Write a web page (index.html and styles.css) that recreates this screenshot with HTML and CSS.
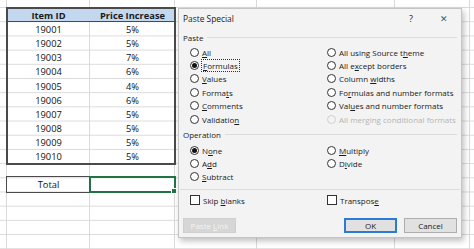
FILE: index.html
```html
<!DOCTYPE html>
<html lang="en">
<head>
    <meta charset="UTF-8">
    <title>Paste Special</title>
    <link rel="stylesheet" href="styles.css">
</head>
<body>
    <div class="sheet">
        <div class="table">
            <div class="head">Item ID</div>
            <div class="head">Price Increase</div>
            <div>19001</div><div>5%</div>
            <div>19002</div><div>5%</div>
            <div>19003</div><div>7%</div>
            <div>19004</div><div>6%</div>
            <div>19005</div><div>4%</div>
            <div>19006</div><div>6%</div>
            <div>19007</div><div>5%</div>
            <div>19008</div><div>5%</div>
            <div>19009</div><div>5%</div>
            <div>19010</div><div>5%</div>
        </div>
        <div class="total-row">
            <div class="total">Total</div>
            <div class="selected"><span class="handle"></span></div>
        </div>
    </div>

    <div class="dialog">
        <div class="titlebar">
            <span class="title">Paste Special</span>
            <span class="help">?</span>
            <span class="close">&#x2715;</span>
        </div>
        <div class="body">
            <div class="group"><span>Paste</span></div>
            <div class="options">
                <div class="opt"><span class="radio"></span><span><u>A</u>ll</span></div>
                <div class="opt"><span class="radio"></span><span>All using Source t<u>h</u>eme</span></div>
                <div class="opt"><span class="radio on"></span><span class="focus"><u>F</u>ormulas</span></div>
                <div class="opt"><span class="radio"></span><span>All e<u>x</u>cept borders</span></div>
                <div class="opt"><span class="radio"></span><span><u>V</u>alues</span></div>
                <div class="opt"><span class="radio"></span><span>Column <u>w</u>idths</span></div>
                <div class="opt"><span class="radio"></span><span>Forma<u>t</u>s</span></div>
                <div class="opt"><span class="radio"></span><span>Fo<u>r</u>mulas and number formats</span></div>
                <div class="opt"><span class="radio"></span><span><u>C</u>omments</span></div>
                <div class="opt"><span class="radio"></span><span>Val<u>u</u>es and number formats</span></div>
                <div class="opt"><span class="radio"></span><span>Validatio<u>n</u></span></div>
                <div class="opt disabled"><span class="radio"></span><span>All merging conditional formats</span></div>
            </div>
            <div class="group"><span>Operation</span></div>
            <div class="options">
                <div class="opt"><span class="radio on"></span><span>N<u>o</u>ne</span></div>
                <div class="opt"><span class="radio"></span><span><u>M</u>ultiply</span></div>
                <div class="opt"><span class="radio"></span><span>A<u>d</u>d</span></div>
                <div class="opt"><span class="radio"></span><span>D<u>i</u>vide</span></div>
                <div class="opt"><span class="radio"></span><span><u>S</u>ubtract</span></div>
                <div class="opt"></div>
            </div>
            <div class="separator"></div>
            <div class="options checks">
                <div class="opt"><span class="check"></span><span>Skip <u>b</u>lanks</span></div>
                <div class="opt"><span class="check"></span><span>Transpos<u>e</u></span></div>
            </div>
            <div class="buttons">
                <button class="btn disabled-btn">Paste <u>L</u>ink</button>
                <span class="spacer"></span>
                <button class="btn default">OK</button>
                <button class="btn">Cancel</button>
            </div>
        </div>
    </div>
</body>
</html>
```

FILE: styles.css
```css
body {
    margin: 0;
    width: 474px;
    height: 249px;
    overflow: hidden;
    position: relative;
    background: white;
}
.sheet {
    height: 249px;
    display: grid;
    grid-template-columns: 7px 83px 85px 1fr;
    grid-template-rows: 8px repeat(11, 14.2px) 14.2px 14.2px 1fr;
    font-family: "Open Sans", "Liberation Sans", sans-serif;
    font-size: 9.3px;
    color: #111;
    background-image:
        linear-gradient(to right,
            transparent 6px, #dadada 6px 7px,
            transparent 7px 89px, #dadada 89px 90px,
            transparent 90px 174px, #dadada 174px 175px,
            transparent 175px 256px, #dadada 256px 257px,
            transparent 257px 394px, #dadada 394px 395px,
            transparent 395px 469px, #dadada 469px 470px,
            transparent 470px),
        linear-gradient(to bottom, transparent 13.2px, #dadada 13.2px);
    background-size: 100% 100%, 100% 14.2px;
    background-repeat: no-repeat, repeat-y;
    background-position: 0 0, 0 8px;
}
.table {
    grid-row: 2 / 13;
    grid-column: 2 / 4;
    display: grid;
    grid-template-columns: 83px 85px;
    grid-auto-rows: 14.2px;
    outline: 2px solid #4a4a4a;
    outline-offset: -1px;
}
.table div {
    display: flex;
    align-items: center;
    justify-content: center;
}
.table .head {
    background: #c3d8ee;
    font-weight: bold;
    color: #1a1a1a;
    border-bottom: 1px solid #4a4a4a;
    margin-top: 1px;
}
.total-row {
    grid-row: 14;
    grid-column: 2 / 4;
    display: grid;
    grid-template-columns: 83px 85px;
    margin-top: -1px;
}
.total {
    display: flex;
    align-items: center;
    justify-content: center;
    outline: 1px solid #4a4a4a;
}
.selected {
    position: relative;
    outline: 2px solid #217346;
    outline-offset: -1px;
}
.handle {
    position: absolute;
    right: -2px;
    bottom: -2px;
    width: 4px;
    height: 4px;
    background: #217346;
    border: 1px solid white;
}

.dialog {
    position: absolute;
    left: 178px;
    top: 8px;
    width: 284px;
    height: 230px;
    box-sizing: border-box;
    background: #f3f3f3;
    border: 1px solid #c4c4c4;
    box-shadow: 2px 3px 6px rgba(0, 0, 0, 0.25);
    font-family: "Open Sans", "Noto Sans", sans-serif;
    font-size: 8px;
    color: #1a1a1a;
    display: flex;
    flex-direction: column;
}
.titlebar {
    height: 19px;
    display: flex;
    align-items: center;
    padding: 0 4px;
    font-size: 8.4px;
}
.title {
    flex: 1;
}
.help {
    width: 31px;
    font-size: 9px;
}
.close {
    width: 17px;
    color: #555;
    font-size: 9px;
}
.body {
    padding: 0 4px 0 4px;
    display: flex;
    flex-direction: column;
}
.group {
    height: 12px;
    margin-top: 3px;
    display: flex;
    align-items: center;
    gap: 4px;
}
.group::after {
    content: "";
    flex: 1;
    height: 1px;
    background: #dcdcdc;
}
.options {
    display: grid;
    grid-template-columns: 137px 1fr;
    grid-auto-rows: 13.4px;
    padding-left: 7px;
    margin-top: 2.5px;
}
.options.checks {
    margin-top: 4px;
}
.opt {
    display: flex;
    align-items: center;
    gap: 3px;
    white-space: nowrap;
}
.opt u {
    text-decoration-thickness: 1px;
    text-underline-offset: 1px;
}
.radio {
    width: 9px;
    height: 9px;
    box-sizing: border-box;
    border: 1px solid #333;
    border-radius: 50%;
    background: white;
    display: flex;
    align-items: center;
    justify-content: center;
}
.radio.on::after {
    content: "";
    width: 5px;
    height: 5px;
    border-radius: 50%;
    background: #111;
}
.check {
    width: 10px;
    height: 10px;
    box-sizing: border-box;
    border: 1px solid #333;
    background: white;
}
.focus {
    outline: 1px dotted #333;
    padding: 0 1px;
}
.disabled {
    color: #b4b4b4;
}
.disabled .radio {
    border-color: #d0d0d0;
    background: #f3f3f3;
}
.separator {
    height: 1px;
    background: #dcdcdc;
    margin: 5px -3px 0 -3px;
}
.buttons {
    display: flex;
    gap: 7px;
    margin-top: 11px;
    height: 15px;
}
.spacer {
    flex: 1;
}
.btn {
    width: 53px;
    height: 15px;
    padding: 0;
    font-family: inherit;
    font-size: 8px;
    color: #1a1a1a;
    background: #e1e1e1;
    border: 1px solid #adadad;
}
.btn.default {
    border: 2px solid #2b7bd4;
}
.disabled-btn {
    background: #d6d6d6;
    border-color: #cfcfcf;
    color: #f3f3f3;
}
```
